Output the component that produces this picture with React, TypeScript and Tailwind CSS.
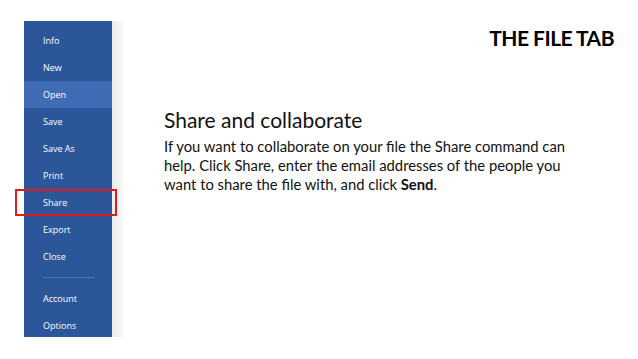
export default function App() {
  const items = ["Info", "New", "Open", "Save", "Save As", "Print", "Share", "Export", "Close"];
  const bottom = ["Account", "Options"];

  return (
    <div className="w-[638px] h-[359px] bg-white relative overflow-hidden flex">
      <div className="pl-6 pt-[21px] flex">
        <div className="w-[88px] h-[316px] overflow-hidden bg-[#2b579a] flex flex-col pt-[6px] font-['Open_Sans',sans-serif] text-[9px] text-white">
          {items.map((it) => (
            <div
              key={it}
              className={`h-[27px] shrink-0 flex items-center pl-[19px] ${it === "Open" ? "bg-[#3f6cb4]" : ""}`}
            >
              {it}
            </div>
          ))}
          <div className="h-[15px] shrink-0 flex items-center pl-[19px]">
            <div className="w-[52px] h-px bg-[#4a72ad]" />
          </div>
          {bottom.map((it) => (
            <div key={it} className="h-[27px] shrink-0 flex items-center pl-[19px]">
              {it}
            </div>
          ))}
        </div>
        <div className="w-[11px] h-[316px] bg-gradient-to-r from-[#ececec] to-[#f8f8f8]" />
      </div>

      {/* highlight box around Share */}
      <div className="absolute left-[15px] top-[189px] w-[102px] h-[27px] border-2 border-[#e0191b]" />

      <div className="flex-1 flex flex-col font-['Lato',sans-serif] text-black">
        <div className="self-end mr-[24px] mt-[27px] text-[21px] font-bold leading-none tracking-tight">THE FILE TAB</div>
        <div className="ml-[41px] mt-[60px]">
          <div className="text-[21px] leading-[24px] text-[#111]">Share and collaborate</div>
          <p className="text-[14.8px] leading-[19px] w-[412px] mt-[5px] text-[#111]">
            If you want to collaborate on your file the Share command can help. Click Share, enter the email addresses of the people you want to share the file with, and click <b>Send</b>.
          </p>
        </div>
      </div>
    </div>
  );
}
